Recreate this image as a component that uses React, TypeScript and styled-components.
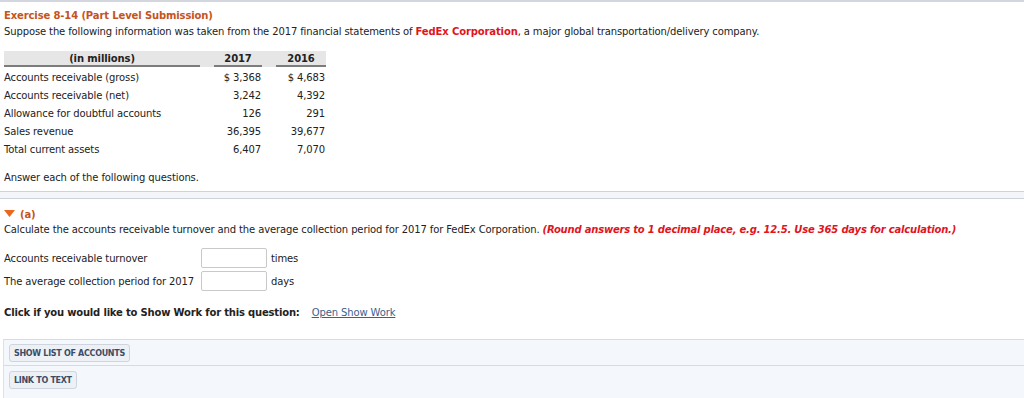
import * as React from "react";
import styled, { createGlobalStyle } from "styled-components";

const GlobalStyle = createGlobalStyle`
  html, body {
    margin: 0;
    padding: 0;
    background: #ffffff;
  }
  body {
    font-family: "DejaVu Sans", Verdana, sans-serif;
    font-size: 10px;
    letter-spacing: -0.12px;
    color: #222222;
  }
`;

const Page = styled.div`
  width: 1024px;
  height: 398px;
  overflow: hidden;
  border-top: 2px solid #d3d6de;
  box-sizing: border-box;
`;

const Intro = styled.section`
  padding: 6px 4px 0 4px;
`;

const Title = styled.div`
  font-weight: bold;
  color: #c4541c;
  height: 16px;
  line-height: 16px;
`;

const Line = styled.div`
  height: 16px;
  line-height: 16px;
`;

const Brand = styled.span`
  font-weight: bold;
  color: #e0141c;
`;

const Table = styled.div`
  margin-top: 11px;
  display: grid;
  grid-template-columns: 196px 48px 50px;
  column-gap: 14px;
  width: 322px;
`;

const HeadRow = styled.div`
  display: contents;
`;

const HeadCell = styled.div`
  background: #e6e6e6;
  font-weight: bold;
  text-align: center;
  height: 13px;
  line-height: 13px;
  padding-top: 1px;
  margin-bottom: 2px;
  border-bottom: 2px solid #7c7c7c;
  box-shadow: 7px 0 0 #e6e6e6, -7px 0 0 #e6e6e6;
  &:first-child {
    box-shadow: 7px 0 0 #e6e6e6;
  }
  &:last-child {
    box-shadow: -7px 0 0 #e6e6e6;
  }
`;

const Cell = styled.div<{ $num?: boolean }>`
  height: 18px;
  line-height: 18px;
  text-align: ${(p) => (p.$num ? "right" : "left")};
  padding-right: ${(p) => (p.$num ? "1px" : "0")};
  white-space: nowrap;
`;

const Note = styled.div`
  margin-top: 11px;
  height: 16px;
  line-height: 16px;
`;

const Divider = styled.div`
  margin-top: 5px;
  height: 6px;
  border-top: 1px solid #cdd3dc;
  border-bottom: 1px solid #cdd3dc;
  background: #f3f5f9;
`;

const Part = styled.section`
  padding: 7px 4px 0 4px;
`;

const PartHead = styled.div`
  display: flex;
  align-items: center;
  gap: 5px;
  height: 16px;
  color: #c4541c;
  font-weight: bold;
`;

const Prompt = styled.div`
  height: 16px;
  line-height: 16px;
`;

const Hint = styled.span`
  color: #e0141c;
  font-weight: bold;
  font-style: italic;
  letter-spacing: -0.2px;
`;

const Answers = styled.div`
  margin-top: 10px;
  display: grid;
  grid-template-columns: 193px 66px auto;
  column-gap: 4px;
  row-gap: 3px;
  align-items: center;
  width: max-content;
`;

const Label = styled.span`
  white-space: nowrap;
`;

const Input = styled.input`
  box-sizing: border-box;
  width: 66px;
  height: 20px;
  border: 1px solid #c9c9c9;
  border-radius: 2px;
  background: #ffffff;
  margin: 0;
`;

const ShowWork = styled.div`
  margin-top: 14px;
  display: flex;
  gap: 12px;
  height: 16px;
  line-height: 16px;
`;

const Strong = styled.span`
  font-weight: bold;
  letter-spacing: -0.18px;
`;

const WorkLink = styled.a`
  color: #3c5f8c;
  text-decoration: underline;
  cursor: pointer;
`;

const Tools = styled.div`
  margin: 18px 0 0 3px;
  background: #f4f7fb;
  border-top: 1px solid #d6dbe3;
  border-left: 1px solid #dde2ea;
`;

const ToolRow = styled.div<{ $last?: boolean }>`
  padding: ${(p) => (p.$last ? "5px 5px 12px" : "4px 5px 3px")};
  border-bottom: ${(p) => (p.$last ? "none" : "1px solid #d6dbe3")};
`;

const ToolButton = styled.button`
  display: block;
  font-family: inherit;
  font-size: 8px;
  font-weight: bold;
  letter-spacing: -0.3px;
  color: #3b4c66;
  background: #edf1f6;
  border: 1px solid #cfd5de;
  border-radius: 3px;
  height: 18px;
  padding: 0 4px;
  cursor: pointer;
`;

const Caret = () => (
  <svg width="11" height="8" viewBox="0 0 11 8">
    <path d="M0 0 L11 0 L5.5 7 Z" fill="#e8691d" />
  </svg>
);

const rows = [
  ["Accounts receivable (gross)", "$ 3,368", "$ 4,683"],
  ["Accounts receivable (net)", "3,242", "4,392"],
  ["Allowance for doubtful accounts", "126", "291"],
  ["Sales revenue", "36,395", "39,677"],
  ["Total current assets", "6,407", "7,070"],
];

export default function App() {
  return (
    <Page>
      <GlobalStyle />
      <Intro>
        <Title>Exercise 8-14 (Part Level Submission)</Title>
        <Line>
          Suppose the following information was taken from the 2017 financial
          statements of <Brand>FedEx Corporation</Brand>, a major global
          transportation/delivery company.
        </Line>
        <Table>
          <HeadRow>
            <HeadCell>(in millions)</HeadCell>
            <HeadCell>2017</HeadCell>
            <HeadCell>2016</HeadCell>
          </HeadRow>
          {rows.map((r) => (
            <React.Fragment key={r[0]}>
              <Cell>{r[0]}</Cell>
              <Cell $num>{r[1]}</Cell>
              <Cell $num>{r[2]}</Cell>
            </React.Fragment>
          ))}
        </Table>
        <Note>Answer each of the following questions.</Note>
      </Intro>
      <Divider />
      <Part>
        <PartHead>
          <Caret />
          <span>(a)</span>
        </PartHead>
        <Prompt>
          Calculate the accounts receivable turnover and the average collection
          period for 2017 for FedEx Corporation.{" "}
          <Hint>
            (Round answers to 1 decimal place, e.g. 12.5. Use 365 days for
            calculation.)
          </Hint>
        </Prompt>
        <Answers>
          <Label>Accounts receivable turnover</Label>
          <Input type="text" />
          <Label>times</Label>
          <Label>The average collection period for 2017</Label>
          <Input type="text" />
          <Label>days</Label>
        </Answers>
        <ShowWork>
          <Strong>Click if you would like to Show Work for this question:</Strong>
          <WorkLink>Open Show Work</WorkLink>
        </ShowWork>
      </Part>
      <Tools>
        <ToolRow>
          <ToolButton>SHOW LIST OF ACCOUNTS</ToolButton>
        </ToolRow>
        <ToolRow $last>
          <ToolButton>LINK TO TEXT</ToolButton>
        </ToolRow>
      </Tools>
    </Page>
  );
}
